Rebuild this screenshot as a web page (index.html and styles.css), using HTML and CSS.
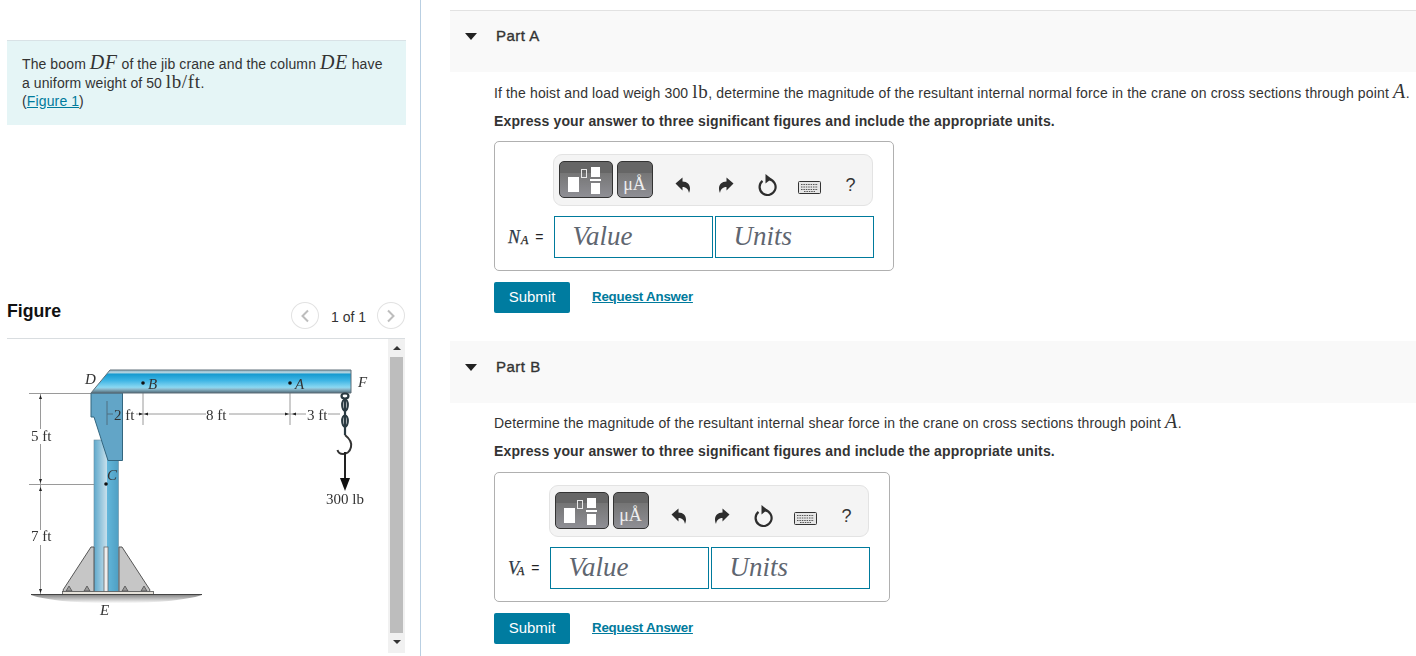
FILE: index.html
```html
<!DOCTYPE html>
<html lang="en">
<head>
<meta charset="utf-8">
<title>Jib crane problem</title>
<link rel="stylesheet" href="styles.css">
</head>
<body>
<svg class="defs" width="0" height="0" aria-hidden="true">
  <defs>
    <symbol id="undo" viewBox="0 0 18 18"><path d="M1.500 7.500 8.500 1.500v4c4.800 0 7.500 3.200 7.500 7 0 1.700-.5 3.200-1 4.400-.6-3.600-2.600-6-6.500-6v3.600z"/></symbol>
    <symbol id="redo" viewBox="0 0 18 18"><path d="M16.500 7.500 9.500 1.500v4c-4.800 0-7.500 3.200-7.500 7 0 1.700.5 3.200 1 4.400.6-3.600 2.600-6 6.500-6v3.600z"/></symbol>
    <symbol id="reset" viewBox="0 0 20 22"><path class="ring" d="M5.500 6.800a8 8 0 1 0 6.500-1.700"/><path d="M8.500 0v9.500L14.500 4.800z"/></symbol>
    <symbol id="kbd" viewBox="0 0 23 13"><rect class="kbd-body" x=".5" y=".5" width="22" height="12" rx="1"/><path class="kbd-keys" d="M3 3.500h17M3 6h17M3 8.500h17M6 10.500h11"/></symbol>
    <symbol id="frac" viewBox="0 0 54 37"><rect class="tile" x="9" y="16" width="11" height="15"/><rect class="tile-o" x="22.500" y="8.500" width="5" height="8"/><rect class="tile" x="32" y="6" width="9" height="10"/><rect class="tile" x="31" y="18" width="11" height="2"/><rect class="tile" x="32" y="22" width="9" height="11"/></symbol>
  </defs>
</svg>
<div class="page">
  <aside class="left">
    <div class="intro">
      <p>The boom <span class="mi big">DF</span> of the jib crane and the column <span class="mi big">DE</span> have<br>a uniform weight of 50 <span class="mn">lb/ft</span>.<br>(<a class="link" href="#fig">Figure 1</a>)</p>
    </div>
    <div class="fig-head">
      <h2 class="fig-title">Figure</h2>
      <div class="pager">
        <span class="round"><svg width="10" height="14" viewBox="0 0 10 14"><path class="chev" d="M8 1.500 2.500 7 8 12.500"/></svg></span>
        <span class="count">1 of 1</span>
        <span class="round"><svg width="10" height="14" viewBox="0 0 10 14"><path class="chev" d="M2 1.500 7.500 7 2 12.500"/></svg></span>
      </div>
    </div>
    <div class="fig-body" id="fig">
      <svg class="crane" width="381" height="317" viewBox="7 339 381 317">
        <defs>
          <linearGradient id="beam" x1="0" y1="0" x2="0" y2="1">
            <stop offset="0" stop-color="#8fb3c4"/><stop offset=".13" stop-color="#b4d6e3"/><stop offset=".17" stop-color="#1499cf"/><stop offset=".45" stop-color="#3db4e4"/><stop offset=".75" stop-color="#8ad8f2"/><stop offset=".82" stop-color="#8fc0d4"/><stop offset="1" stop-color="#4f6a78"/>
          </linearGradient>
          <linearGradient id="col" x1="0" y1="0" x2="1" y2="0">
            <stop offset="0" stop-color="#5fa9cc"/><stop offset=".52" stop-color="#c6dfeb"/><stop offset=".54" stop-color="#62b6da"/><stop offset="1" stop-color="#4f9fc3"/>
          </linearGradient>
          <linearGradient id="shadow" x1="0" y1="0" x2="0" y2="1">
            <stop offset="0" stop-color="#8a8a8a"/><stop offset="1" stop-color="#fff"/>
          </linearGradient>
        </defs>
        <path class="shadow" d="M31 595H202C170 606 60 606 31 595Z"/>
        <path class="dim" d="M29 393.500H91M29 484.500H103M40.500 393V429M40.500 444V530M40.500 545V594M143 393V425M290 393V425M136 414H147M147 414H206M229 414H306M328 414H340"/>
        <path class="arrowhead" d="M40.500 395l-1.500 4h3zM40.500 593l-1.500-4h3zM40.500 483l-1.500-4h3zM40.500 487l-1.500 4h3zM143 414l-4-1.500v3zM144 414l4-1.500v3zM289 414l-4-1.500v3zM292 414l4-1.500v3z"/>
        <rect class="column" x="94" y="440" width="24.500" height="153"/>
        <path class="gusset" d="M63 590 91 547H94V592H64ZM119 547H122L150 590 149 592H119Z"/>
        <rect class="slot" x="104" y="547" width="4" height="46"/>
        <path class="bolts" d="M66 591l3-5 3 5zM84 591l3-5 3 5zM122 591l3-5 3 5zM141 591l3-5 3 5z"/>
        <rect class="plate" x="62.500" y="591.500" width="91" height="3"/>
        <path class="ground" d="M31 594.500H202"/>
        <path class="head" d="M91 393H122.500V460.500H108L94 417H91Z"/>
        <path class="beam" d="M91 393 110 370H351V393Z"/>
        <path class="dim-on" d="M107 401V425M107 414H113"/>
        <circle class="pt" cx="143" cy="383" r="1.800"/>
        <circle class="pt" cx="290" cy="383" r="1.800"/>
        <circle class="pt" cx="106" cy="484" r="1.800"/>
        <g class="chain">
          <ellipse cx="345" cy="396" rx="3.500" ry="2.500"/><ellipse cx="345" cy="405" rx="2.800" ry="5.500"/><path d="M345 399v12"/><ellipse cx="345" cy="421" rx="2.800" ry="5.500"/><path d="M345 411v24"/>
        </g>
        <path class="hook" d="M345 435c5 4 7 8 6 12-1 5-5 7-8 7-3 0-5-2-5.500-4"/>
        <path class="rope" d="M345 452V482"/>
        <path class="tip" d="M340 478H350L345 491Z"/>
        <text class="lbl it" x="85" y="384">D</text>
        <text class="lbl it" x="148" y="389">B</text>
        <text class="lbl it" x="295" y="389">A</text>
        <text class="lbl it" x="358" y="387">F</text>
        <text class="lbl it" x="107" y="480">C</text>
        <text class="lbl it" x="100" y="615">E</text>
        <text class="lbl" x="31" y="441">5 ft</text>
        <text class="lbl" x="31" y="541">7 ft</text>
        <text class="lbl" x="114" y="420">2 ft</text>
        <text class="lbl" x="206" y="420">8 ft</text>
        <text class="lbl" x="307" y="420">3 ft</text>
        <text class="lbl" x="326" y="504">300 lb</text>
      </svg>
      <div class="scroll">
        <span class="sc-up"></span>
        <span class="sc-thumb"></span>
        <span class="sc-down"></span>
      </div>
    </div>
  </aside>
  <main class="right">
    <section class="part">
      <header class="part-head"><span class="tri"></span><h3 class="part-title">Part A</h3></header>
      <div class="part-body">
        <p class="q">If the hoist and load weigh 300 <span class="mn">lb</span>, determine the magnitude of the resultant internal normal force in the crane on cross sections through point <span class="mi big">A</span>.</p>
        <p class="hint">Express your answer to three significant figures and include the appropriate units.</p>
        <div class="box">
          <div class="toolbar">
            <span class="tb tb-wide"><svg width="54" height="37"><use href="#frac"/></svg></span>
            <span class="tb tb-mu">μÅ</span>
            <svg class="ic ic-undo" width="18" height="18"><use href="#undo"/></svg>
            <svg class="ic ic-redo" width="18" height="18"><use href="#redo"/></svg>
            <svg class="ic ic-reset" width="20" height="22"><use href="#reset"/></svg>
            <svg class="ic ic-kbd" width="23" height="13"><use href="#kbd"/></svg>
            <span class="ic-help">?</span>
          </div>
          <div class="var"><i>N</i><sub>A</sub><span class="eq">=</span></div>
          <div class="fields">
            <input class="field" placeholder="Value" aria-label="Value">
            <input class="field" placeholder="Units" aria-label="Units">
          </div>
        </div>
        <div class="actions"><button class="submit" type="button">Submit</button><a class="req" href="#a">Request Answer</a></div>
      </div>
    </section>
    <section class="part part-b">
      <header class="part-head"><span class="tri"></span><h3 class="part-title">Part B</h3></header>
      <div class="part-body">
        <p class="q">Determine the magnitude of the resultant internal shear force in the crane on cross sections through point <span class="mi big">A</span>.</p>
        <p class="hint">Express your answer to three significant figures and include the appropriate units.</p>
        <div class="box">
          <div class="toolbar">
            <span class="tb tb-wide"><svg width="54" height="37"><use href="#frac"/></svg></span>
            <span class="tb tb-mu">μÅ</span>
            <svg class="ic ic-undo" width="18" height="18"><use href="#undo"/></svg>
            <svg class="ic ic-redo" width="18" height="18"><use href="#redo"/></svg>
            <svg class="ic ic-reset" width="20" height="22"><use href="#reset"/></svg>
            <svg class="ic ic-kbd" width="23" height="13"><use href="#kbd"/></svg>
            <span class="ic-help">?</span>
          </div>
          <div class="var var-v"><i>V</i><sub>A</sub><span class="eq">=</span></div>
          <div class="fields">
            <input class="field" placeholder="Value" aria-label="Value">
            <input class="field" placeholder="Units" aria-label="Units">
          </div>
        </div>
        <div class="actions"><button class="submit" type="button">Submit</button><a class="req" href="#b">Request Answer</a></div>
      </div>
    </section>
  </main>
</div>
</body>
</html>
```
FILE: styles.css
```css
* { box-sizing: border-box; }
html, body { margin: 0; height: 656px; overflow: hidden; background: #fff; }
body { font-family: "Liberation Sans", Arial, sans-serif; font-size: 14px; color: #333; }
p, h2, h3 { margin: 0; }
.defs { display: block; height: 0; }
.page { display: flex; height: 656px; }

.left { width: 421px; flex: none; padding: 40px 14px 0 7px; border-right: 1px solid #b9cfe2; }
.intro { height: 85px; padding: 14px 15px 0; background: #e5f5f6; border-top: 1px solid #d9e2e6; line-height: 18.500px; letter-spacing: .14px; word-spacing: -.2px; white-space: nowrap; }
.mi { font-family: "Liberation Serif", serif; font-style: italic; }
.mi.big { font-size: 20px; line-height: 0; letter-spacing: .6px; }
.mn { font-family: "Liberation Serif", serif; font-size: 19px; line-height: 0; letter-spacing: .6px; }
.link { color: #007a9c; text-decoration: underline; }

.fig-head { display: flex; justify-content: space-between; height: 39px; margin-top: 175px; margin-right: 1px; border-bottom: 1px solid #d9dde0; }
.fig-title { font-size: 17.700px; line-height: 22px; color: #111; font-weight: bold; }
.pager { display: flex; align-items: flex-start; gap: 11px; margin-top: 2px; }
.round { width: 28px; height: 27px; border: 1px solid #e2e2e2; border-radius: 50%; display: flex; align-items: center; justify-content: center; }
.chev { fill: none; stroke: #bdbdbd; stroke-width: 2; }
.count { line-height: 30px; color: #333; margin-left: 1px; }

.fig-body { display: flex; align-items: flex-start; height: 317px; }
.crane { flex: none; filter: blur(.35px); }
.scroll { width: 17px; height: 314px; background: #f1f1f1; display: flex; flex-direction: column; align-items: center; padding-top: 7px; }
.sc-up { width: 0; height: 0; border: 4px solid transparent; border-top: 0; border-bottom: 4px solid #333; }
.sc-thumb { width: 13px; height: 276px; margin-top: 7px; background: #bdbdbd; }
.sc-down { width: 0; height: 0; margin-top: 7px; border: 4px solid transparent; border-bottom: 0; border-top: 4px solid #333; }

.right { flex: 1; padding: 10px 0 0 29px; min-width: 0; }
.part-b { margin-top: 28px; }
.part-head { height: 62px; display: flex; padding: 0 0 0 15px; background: #f9f9f9; border-top: 1px solid #e2e2e2; }
.part-b .part-head { border-top: 0; padding-top: 1px; }
.tri { width: 0; height: 0; margin-top: 22px; border: 6.500px solid transparent; border-bottom: 0; border-top: 7px solid #222; }
.part-title { font-size: 15px; font-weight: normal; -webkit-text-stroke: .35px #333; letter-spacing: .5px; line-height: 20px; margin: 15px 0 0 19px; }
.part-body { padding: 11px 0 0 44px; }
.part-b .part-body { padding-top: 10px; }
.q { line-height: 20px; white-space: nowrap; letter-spacing: .14px; }
.hint { font-weight: bold; line-height: 20px; margin-top: 8px; white-space: nowrap; letter-spacing: .14px; }
.part-b .hint { margin-top: 8px; }

.box { display: inline-grid; grid-template-columns: auto 320px; column-gap: 10px; row-gap: 10px; margin-top: 10px; padding: 12px 19px 12px 13px; border: 1px solid #b0b0b0; border-radius: 5px; vertical-align: top; }
.part-b .box { margin-top: 11px; }
.toolbar { grid-column: 2; margin-left: -1px; width: 320px; height: 52px; display: flex; align-items: center; padding-left: 5px; background: #f4f4f4; border: 1px solid #e3e3e3; border-radius: 9px; }
.tb { display: block; height: 37px; margin-top: -1px; border: 1px solid #333; border-radius: 5px; background: linear-gradient(#666 0 30%, #757575 30%, #8f8f95 100%); }
.tb-wide { width: 54px; }
.tb-wide svg { display: block; margin: -1px; }
.tile { fill: #fff; }
.tile-o { fill: none; stroke: #e8e8e8; }
.tb-mu { width: 36px; margin-left: 4px; color: #eee; font-family: "Liberation Serif", serif; font-size: 18px; line-height: 44px; text-align: center; }
.ic { fill: #2d2d2d; flex: none; margin-top: 10px; }
.ic-undo { margin-left: 21px; }
.ic-redo { margin-left: 25px; }
.ic-reset { margin-left: 22px; }
.ring { fill: none; stroke: #2d2d2d; stroke-width: 2.200; }
.ic-kbd { margin-left: 21px; margin-top: 14px; }
.kbd-body { fill: #e6e6e6; stroke: #333; }
.kbd-keys { fill: none; stroke: #555; stroke-width: 1.200; stroke-dasharray: 1.500 .9; }
.ic-help { margin-left: 25px; margin-top: 10px; font-size: 18px; color: #333; }

.var { grid-column: 1; grid-row: 2; display: flex; align-items: center; white-space: pre; font-family: "Liberation Serif", serif; color: #222; }
.var i { font-size: 18px; color: #2c3947; -webkit-text-stroke: .25px #2c3947; }
.var sub { font-size: 12px; font-style: italic; -webkit-text-stroke: .25px #222; vertical-align: baseline; margin: 6px 0 0 1px; }
.var-v i { margin-right: -3px; }
.eq { font-family: "Liberation Sans", sans-serif; font-size: 14px; margin-left: 7px; }
.fields { grid-column: 2; grid-row: 2; display: flex; gap: 2px; }
.field { flex: 1; min-width: 0; height: 42px; padding: 0 0 2px 18px; border: 1px solid #007a9c; border-radius: 0; background: #fff; font-family: "Liberation Serif", serif; font-style: italic; font-size: 27px; color: #555; }
.field::placeholder { color: #5f6670; opacity: 1; }

.actions { display: flex; align-items: center; gap: 22px; margin-top: 11px; }
.submit { width: 76px; height: 31px; padding: 0 0 2px; border: 0; border-radius: 2px; background: #007ca0; color: #fff; font-family: "Liberation Sans", sans-serif; font-size: 15px; }
.req { color: #007a9c; font-weight: bold; font-size: 13.300px; letter-spacing: -.2px; text-decoration: underline; margin-top: -2px; }

.dim { fill: none; stroke: #9a9a9a; stroke-width: 1; }
.dim-on { fill: none; stroke: #4f6f80; stroke-width: 1; }
.arrowhead { fill: #222; }
.column { fill: url(#col); stroke: #6d8ea0; stroke-width: .6; }
.gusset { fill: #c6c6c6; stroke: #555; stroke-width: 1; }
.slot { fill: #eee; stroke: #666; stroke-width: .8; }
.bolts { fill: #999; stroke: #444; stroke-width: .7; }
.plate { fill: #e6e2da; stroke: #555; stroke-width: .8; }
.ground { stroke: #444; stroke-width: 1; }
.shadow { fill: url(#shadow); }
.head { fill: #62a5c7; stroke: #33667f; stroke-width: 1; }
.beam { fill: url(#beam); stroke: #5f6f78; stroke-width: 1; }
.pt { fill: #111; }
.chain { fill: none; stroke: #2a3a42; stroke-width: 2.200; }
.hook { fill: none; stroke: #333; stroke-width: 2; }
.rope { stroke: #222; stroke-width: 2; }
.tip { fill: #111; }
.lbl { font-family: "Liberation Serif", serif; font-size: 15px; fill: #333; }
.lbl.it { font-style: italic; }
```
